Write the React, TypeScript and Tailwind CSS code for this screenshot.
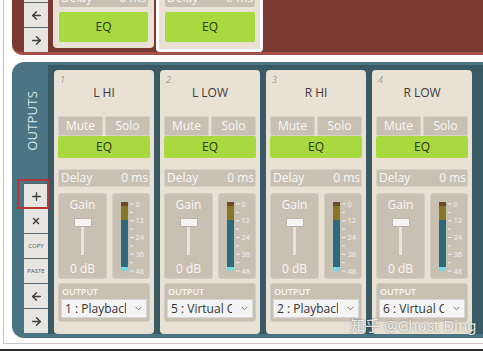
import React from "react";
import { Plus, X, ArrowLeft, ArrowRight } from "lucide-react";

const channels = [
  { n: 1, name: "L HI", out: "1 : Playback" },
  { n: 2, name: "L LOW", out: "5 : Virtual Channel" },
  { n: 3, name: "R HI", out: "2 : Playback" },
  { n: 4, name: "R LOW", out: "6 : Virtual Channel" },
];

function Meter() {
  const major = [0, 12, 24, 36, 48];
  const y0 = 10;
  const step = 16.75;
  return (
    <div className="flex h-[86px] w-[38px] items-start rounded-[3px] border border-[#d3cbbf] bg-[#c9c0b4]">
      <div className="ml-[8px] mt-[8px] flex h-[69px] w-[8px] flex-col">
        <div className="h-[4px] bg-[#6c482c]" />
        <div className="h-[14px] bg-[#857727]" />
        <div className="flex-1 bg-[#2c6a7e]" />
        <div className="h-[4px] bg-[#7ad4ea]" />
      </div>
      <svg width="21" height="84" className="shrink-0">
        {major.map((m, i) => {
          const y = y0 + i * step;
          return (
            <g key={m}>
              <line x1="2" x2="5.5" y1={y} y2={y} stroke="#f4f1ec" strokeWidth="1" />
              <text x="7.5" y={y + 2.6} fontSize="7.5" fill="#f4f1ec" fontFamily="Open Sans, sans-serif">
                {m}
              </text>
            </g>
          );
        })}
        {[0, 1, 2, 3].map((i) => {
          const y = y0 + i * step + step / 2;
          return <line key={i} x1="2" x2="5" y1={y} y2={y} stroke="#f4f1ec" strokeWidth="1" />;
        })}
      </svg>
    </div>
  );
}

function Strip({ n, name, out }: { n: number; name: string; out: string }) {
  return (
    <div className="flex w-[100px] shrink-0 flex-col rounded-[4px] bg-[#e9e1d4] px-[4px] pb-[5px] pt-[5px]">
      <div className="ml-[2px] h-[10px] text-[9px] italic leading-[10px] text-[#a39b8f]">{n}</div>
      <div className="h-[16px] text-center text-[12px] leading-[16px] text-[#3a3a3a]">{name}</div>
      <div className="mt-[15px] grid h-[17px] grid-cols-2 gap-[2px]">
        <div className="flex items-center justify-center rounded-[2px] border border-[#d8d0c4] bg-[#c9c0b4] text-[12px] text-[#fbf8f3]">
          Mute
        </div>
        <div className="flex items-center justify-center rounded-[2px] border border-[#d8d0c4] bg-[#c9c0b4] text-[12px] text-[#fbf8f3]">
          Solo
        </div>
      </div>
      <div className="mt-[3px] flex h-[22px] items-center justify-center rounded-[2px] bg-[#a8d93f] text-[12px] text-[#2c3518]">
        EQ
      </div>
      <div className="mt-[11px] flex h-[18px] items-center justify-between rounded-[2px] border border-[#d8d0c4] bg-[#c9c0b4] pl-[2px] pr-[1px] text-[12px] text-[#fbf8f3]">
        <span>Delay</span>
        <span>0 ms</span>
      </div>
      <div className="mt-[6px] flex h-[86px] gap-[5px]">
        <div className="flex w-[49px] flex-col items-center rounded-[3px] border border-[#d3cbbf] bg-[#c9c0b4] pt-[3px]">
          <div className="text-[12px] leading-[16px] text-[#fbf8f3]">Gain</div>
          <div className="mt-[5px] h-[9px] w-[18px] rounded-[1px] border border-[#b8b2aa] bg-[#f5f4f2]" />
          <div className="h-[28px] w-[3px] bg-[#e7e3dd]" />
          <div className="mt-[6px] text-[12px] leading-[16px] text-[#fbf8f3]">0 dB</div>
        </div>
        <Meter />
      </div>
      <div className="mt-[4px] flex h-[39px] flex-col rounded-[3px] border border-[#d3cbbf] bg-[#c9c0b4] px-[2px] pt-[2px]">
        <div className="pl-[1px] text-[9px] font-semibold leading-[11px] text-[#fbf8f3]">OUTPUT</div>
        <div className="mt-[2px] flex h-[19px] items-center justify-between border border-[#d6d6d6] bg-[#f4f4f4] pl-[3px] pr-[4px]">
          <div className="w-[61px] overflow-hidden whitespace-nowrap text-[12px] leading-[16px] text-[#333]">{out}</div>
          <svg width="7" height="5" viewBox="0 0 7 5">
            <polyline points="0.5,0.8 3.5,3.8 6.5,0.8" fill="none" stroke="#777" strokeWidth="1" />
          </svg>
        </div>
      </div>
    </div>
  );
}

function NavBtn({ children }: { children: React.ReactNode }) {
  return (
    <div className="flex h-[25px] w-[24px] items-center justify-center border-t border-[#56666c] bg-[#e7e5e1] text-[#3d3d3d]">
      {children}
    </div>
  );
}

export default function App() {
  return (
    <div className="relative h-[351px] w-[483px] overflow-hidden bg-white font-['Open_Sans',sans-serif]">
      <div className="ml-[3px] flex h-[344px] w-[480px] flex-col border-b border-l border-[#c6c6c6] pl-[8px]">
        {/* top red panel */}
        <div className="flex h-[55px] shrink-0 items-end overflow-hidden rounded-bl-[10px] border-b-[3px] border-[#a24e48] bg-[#7a3a32] pl-[12px]">
          <div className="flex w-[24px] flex-col">
            <NavBtn>
              <X size={11} strokeWidth={3} />
            </NavBtn>
            <NavBtn>
              <ArrowLeft size={13} strokeWidth={2.6} />
            </NavBtn>
            <NavBtn>
              <ArrowRight size={13} strokeWidth={2.6} />
            </NavBtn>
          </div>
          <div className="mb-[4px] ml-[5px] flex w-[101px] flex-col rounded-b-[4px] bg-[#e9e1d4] px-[6px] pb-[6px]">
            <div className="flex h-[18px] items-center justify-between rounded-[2px] bg-[#c9c0b4] px-[2px] text-[12px] text-[#fbf8f3]">
              <span>Delay</span>
              <span>0 ms</span>
            </div>
            <div className="mt-[5px] flex h-[30px] items-center justify-center rounded-[2px] bg-[#a8d93f] text-[12px] text-[#2c3518]">
              EQ
            </div>
          </div>
          <div className="ml-[2px] flex w-[107px] flex-col rounded-b-[4px] border-[3px] border-t-0 border-white bg-[#e9e1d4] pb-[7px] pl-[6px] pr-[5px]">
            <div className="flex h-[18px] items-center justify-between rounded-[2px] bg-[#c9c0b4] px-[2px] text-[12px] text-[#fbf8f3]">
              <span>Delay</span>
              <span>0 ms</span>
            </div>
            <div className="mt-[5px] flex h-[30px] items-center justify-center rounded-[2px] bg-[#a8d93f] text-[12px] text-[#2c3518]">
              EQ
            </div>
          </div>
        </div>

        {/* outputs teal panel */}
        <div className="mt-[7px] flex h-[276px] shrink-0 rounded-l-[12px] bg-[#4a7383]">
          <div className="flex w-[36px] shrink-0 flex-col pb-[5px] pl-[12px] pt-[29px]">
            <div className="rotate-180 text-[13px] leading-[16px] tracking-[0.2px] text-[#d9e7eb] [writing-mode:vertical-rl]">
              OUTPUTS
            </div>
            <div className="relative mt-auto flex flex-col">
              <div className="pointer-events-none absolute left-[-7px] top-[-4px] h-[30px] w-[32px] border-2 border-[#b2383c]" />
              <NavBtn>
                <Plus size={13} strokeWidth={2.4} />
              </NavBtn>
              <NavBtn>
                <X size={10} strokeWidth={3.2} />
              </NavBtn>
              <NavBtn>
                <span className="text-[6px] leading-none text-[#555]">COPY</span>
              </NavBtn>
              <NavBtn>
                <span className="text-[6px] leading-none text-[#555]">PASTE</span>
              </NavBtn>
              <NavBtn>
                <ArrowLeft size={13} strokeWidth={2.6} />
              </NavBtn>
              <NavBtn>
                <ArrowRight size={13} strokeWidth={2.6} />
              </NavBtn>
            </div>
          </div>
          <div className="mb-[4px] mt-[3px] flex flex-1 gap-[6px] bg-[#3a5b66] pl-[6px] pt-[5px]">
            {channels.map((c) => (
              <Strip key={c.n} {...c} />
            ))}
          </div>
        </div>
      </div>
      <div className="mt-[5px] h-[2px] w-full bg-[#2a2a2a]" />

      <div className="absolute left-[350px] top-[315px] whitespace-nowrap font-['Noto_Sans','Noto_Sans_CJK_SC',sans-serif] text-[15px] leading-[20px] text-white/85 [text-shadow:0_0_2px_rgba(0,0,0,0.55)]">
        知乎 @Ghost Ding
      </div>
    </div>
  );
}
